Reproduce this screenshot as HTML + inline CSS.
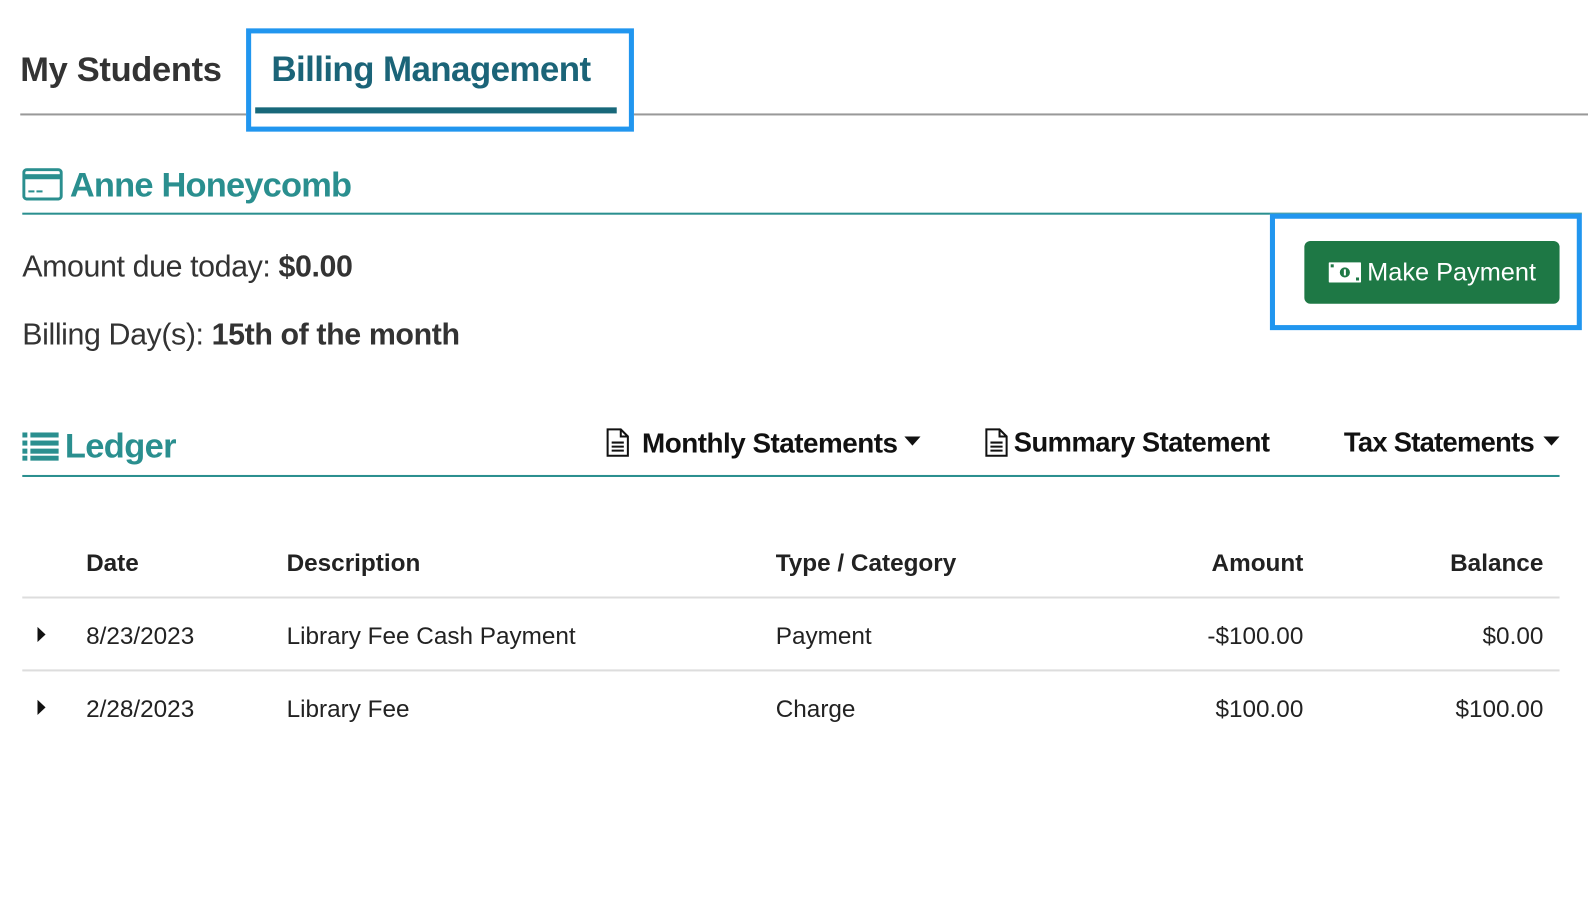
<!DOCTYPE html>
<html><head><meta charset="utf-8"><style>
body{margin:0;width:1588px;height:898px;background:#fff;font-family:"Liberation Sans",sans-serif;color:#222;position:relative;overflow:hidden}
#w{position:absolute;left:0;top:0;width:1568px;height:887px;transform:scale(1.0127);transform-origin:0 0}
.a{position:absolute;white-space:nowrap}
.th{font-weight:bold;font-size:24px;top:543px;color:#222}
.td{font-size:24px;color:#222}
</style></head><body><div id="w">
<div class="a" style="left:20px;top:50px;font-size:34px;font-weight:bold;color:#333;letter-spacing:-0.3px">My Students</div>
<div class="a" style="left:20px;top:112px;width:1568px;height:2px;background:#999"></div>
<div class="a" style="left:243px;top:28px;width:373px;height:92px;border:5px solid #2196ef;background:#fff"></div>
<div class="a" style="left:268px;top:50px;font-size:34.5px;font-weight:bold;color:#1b6478;letter-spacing:-0.6px">Billing Management</div>
<div class="a" style="left:252px;top:106px;width:357px;height:6px;background:#18687a"></div>

<svg class="a" style="left:22px;top:166px" width="40" height="32" viewBox="0 0 40 32"><rect x="1.5" y="1.5" width="37" height="29" rx="3" fill="none" stroke="#2a8f8f" stroke-width="3"/><rect x="1.5" y="6" width="37" height="5" fill="#2a8f8f"/><rect x="6" y="22" width="6" height="2" fill="#2a8f8f"/><rect x="14" y="22" width="6" height="2" fill="#2a8f8f"/></svg>
<div class="a" style="left:69px;top:164px;font-size:34px;font-weight:bold;color:#2a8f8f;letter-spacing:-0.8px">Anne Honeycomb</div>
<div class="a" style="left:22px;top:210px;width:1540px;height:2px;background:#2a8f8f"></div>

<div class="a" style="left:22px;top:247px;font-size:30px;color:#333;letter-spacing:-0.4px">Amount due today: <b>$0.00</b></div>
<div class="a" style="left:22px;top:314px;font-size:30px;color:#333;letter-spacing:-0.4px">Billing Day(s): <b>15th of the month</b></div>

<div class="a" style="left:1254px;top:211px;width:298px;height:105px;border:5px solid #2196ef;background:#fff"></div>
<div class="a" style="left:1288px;top:238px;width:252px;height:62px;background:#1e7845;border-radius:6px;color:#fff;font-size:25px;line-height:62px">
<svg style="position:absolute;left:24px;top:21px" width="32" height="20" viewBox="0 0 32 20"><rect x="0" y="0" width="32" height="20" rx="1" fill="#fff"/><circle cx="16" cy="10" r="5" fill="#1e7845"/><rect x="2" y="2" width="3" height="3" fill="#1e7845"/><rect x="27" y="15" width="3" height="3" fill="#1e7845"/><rect x="15" y="7" width="2" height="6" fill="#fff"/></svg>
<span style="position:absolute;left:62px">Make Payment</span></div>

<svg class="a" style="left:22px;top:427px" width="36" height="28" viewBox="0 0 36 28"><g fill="#2a8f8f"><rect x="0" y="0" width="5" height="5"/><rect x="8" y="0" width="28" height="5"/><rect x="0" y="8" width="5" height="5"/><rect x="8" y="8" width="28" height="5"/><rect x="0" y="16" width="5" height="5"/><rect x="8" y="16" width="28" height="5"/><rect x="0" y="23" width="5" height="5"/><rect x="8" y="23" width="28" height="5"/></g></svg>
<div class="a" style="left:64px;top:422px;font-size:34px;font-weight:bold;color:#2a8f8f;letter-spacing:-0.6px">Ledger</div>

<svg class="a" style="left:598px;top:422px" width="24" height="30" viewBox="0 0 24 30"><path d="M2 2h13l7 7v19H2z" fill="none" stroke="#111" stroke-width="2"/><path d="M15 2v7h7" fill="none" stroke="#111" stroke-width="2"/><path d="M6 15h12M6 19h12M6 23h12" stroke="#111" stroke-width="2"/></svg>
<div class="a" style="left:634px;top:422px;font-size:27.5px;font-weight:bold;color:#111;letter-spacing:-0.5px">Monthly Statements</div>
<svg class="a" style="left:893px;top:431px" width="16" height="10"><path d="M0 0h16L8 9z" fill="#111"/></svg>
<svg class="a" style="left:972px;top:422px" width="24" height="30" viewBox="0 0 24 30"><path d="M2 2h13l7 7v19H2z" fill="none" stroke="#111" stroke-width="2"/><path d="M15 2v7h7" fill="none" stroke="#111" stroke-width="2"/><path d="M6 15h12M6 19h12M6 23h12" stroke="#111" stroke-width="2"/></svg>
<div class="a" style="left:1001px;top:422px;font-size:27px;font-weight:bold;color:#111;letter-spacing:-0.5px">Summary Statement</div>
<div class="a" style="left:1327px;top:422px;font-size:27px;font-weight:bold;color:#111;letter-spacing:-0.7px">Tax Statements</div>
<svg class="a" style="left:1524px;top:431px" width="16" height="10"><path d="M0 0h16L8 9z" fill="#111"/></svg>
<div class="a" style="left:22px;top:469px;width:1518px;height:2px;background:#2a8f8f"></div>

<div class="a th" style="left:85px">Date</div>
<div class="a th" style="left:283px">Description</div>
<div class="a th" style="left:766px">Type / Category</div>
<div class="a th" style="right:281px">Amount</div>
<div class="a th" style="right:44px">Balance</div>
<div class="a" style="left:22px;top:589px;width:1518px;height:2px;background:#ddd"></div>

<svg class="a" style="left:37px;top:619px" width="9" height="15"><path d="M0 0l8 7.5L0 15z" fill="#111"/></svg>
<div class="a td" style="left:85px;top:615px">8/23/2023</div>
<div class="a td" style="left:283px;top:615px">Library Fee Cash Payment</div>
<div class="a td" style="left:766px;top:615px">Payment</div>
<div class="a td" style="right:281px;top:615px">-$100.00</div>
<div class="a td" style="right:44px;top:615px">$0.00</div>
<div class="a" style="left:22px;top:661px;width:1518px;height:2px;background:#ddd"></div>

<svg class="a" style="left:37px;top:691px" width="9" height="15"><path d="M0 0l8 7.5L0 15z" fill="#111"/></svg>
<div class="a td" style="left:85px;top:687px">2/28/2023</div>
<div class="a td" style="left:283px;top:687px">Library Fee</div>
<div class="a td" style="left:766px;top:687px">Charge</div>
<div class="a td" style="right:281px;top:687px">$100.00</div>
<div class="a td" style="right:44px;top:687px">$100.00</div>
</div></body></html>
